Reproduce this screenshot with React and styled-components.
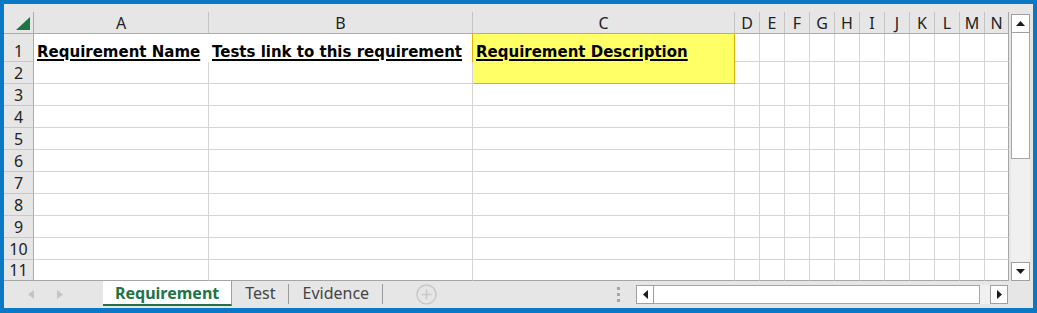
import React from "react";
import styled, { createGlobalStyle } from "styled-components";

const GlobalStyle = createGlobalStyle`
  html, body {
    margin: 0;
    padding: 0;
    background: #ffffff;
  }
`;

const COLUMNS = [
  { name: "A", width: 175 },
  { name: "B", width: 264 },
  { name: "C", width: 262 },
  { name: "D", width: 25 },
  { name: "E", width: 25 },
  { name: "F", width: 25 },
  { name: "G", width: 25 },
  { name: "H", width: 25 },
  { name: "I", width: 25 },
  { name: "J", width: 25 },
  { name: "K", width: 25 },
  { name: "L", width: 25 },
  { name: "M", width: 25 },
  { name: "N", width: 24 },
];

const ROW_HEIGHTS = [28, 22, 22, 22, 22, 22, 22, 22, 22, 22, 21];

const GRID = "#d4d4d4";
const EDGE = "#a6a6a6";

function App() {
  const lastRow = ROW_HEIGHTS.length;
  const lastCol = COLUMNS.length - 1;

  return (
    <>
      <GlobalStyle />
      <Frame>
        <Main>
          <SheetWrap>
            <Sheet
              $cols={COLUMNS.map((c) => c.width + "px").join(" ")}
              $rows={ROW_HEIGHTS.map((h) => h + "px").join(" ")}
            >
              <Corner>
                <svg width="29" height="21" viewBox="0 0 29 21">
                  <polygon points="12,18 26,18 26,5" fill="#217346" />
                </svg>
              </Corner>
              {COLUMNS.map((c, i) => (
                <ColHeader key={c.name} $last={i === lastCol}>
                  {c.name}
                </ColHeader>
              ))}

              {ROW_HEIGHTS.map((h, r) => {
                const row = r + 1;
                const isLast = row === lastRow;
                return (
                  <React.Fragment key={row}>
                    <RowHeader $last={isLast}>{row}</RowHeader>
                    {COLUMNS.map((c, i) => {
                      if (c.name === "C" && row === 2) return null;
                      if (c.name === "C" && row === 1) {
                        return (
                          <Highlight key={c.name}>
                            <Title>Requirement Description</Title>
                          </Highlight>
                        );
                      }
                      if (row === 1 && c.name === "A") {
                        return (
                          <Cell key={c.name} $noRight $noBottom>
                            <Title>Requirement Name</Title>
                          </Cell>
                        );
                      }
                      if (row === 1 && c.name === "B") {
                        return (
                          <Cell key={c.name} $noBottom>
                            <Title>Tests link to this requirement</Title>
                          </Cell>
                        );
                      }
                      return (
                        <Cell
                          key={c.name}
                          $lastRow={isLast}
                          $lastCol={i === lastCol}
                        />
                      );
                    })}
                  </React.Fragment>
                );
              })}
            </Sheet>
          </SheetWrap>

          <VScroll>
            <ScrollButton>
              <svg width="9" height="5" viewBox="0 0 9 5">
                <polygon points="0,5 9,5 4.5,0" fill="#1a1a1a" />
              </svg>
            </ScrollButton>
            <VTrack>
              <VThumb />
            </VTrack>
            <ScrollButton>
              <svg width="9" height="5" viewBox="0 0 9 5">
                <polygon points="0,0 9,0 4.5,5" fill="#1a1a1a" />
              </svg>
            </ScrollButton>
          </VScroll>
        </Main>

        <TabBar>
          <Nav>
            <svg width="6" height="9" viewBox="0 0 6 9">
              <polygon points="6,0 6,9 0,4.5" fill="#c4c4c4" />
            </svg>
            <svg width="6" height="9" viewBox="0 0 6 9">
              <polygon points="0,0 0,9 6,4.5" fill="#c4c4c4" />
            </svg>
          </Nav>
          <Tab $active>Requirement</Tab>
          <Tab>Test</Tab>
          <TabDivider />
          <Tab>Evidence</Tab>
          <TabDivider />
          <AddSheet>
            <svg width="21" height="21" viewBox="0 0 21 21">
              <circle
                cx="10.5"
                cy="10.5"
                r="9.5"
                fill="none"
                stroke="#c8c8c8"
                strokeWidth="1.5"
              />
              <path
                d="M10.5 5.5v10M5.5 10.5h10"
                stroke="#c8c8c8"
                strokeWidth="1.5"
              />
            </svg>
          </AddSheet>
          <Spacer />
          <Grip>
            <span />
            <span />
            <span />
          </Grip>
          <HScroll>
            <ScrollButton>
              <svg width="5" height="9" viewBox="0 0 5 9">
                <polygon points="5,0 5,9 0,4.5" fill="#1a1a1a" />
              </svg>
            </ScrollButton>
            <HThumb />
            <ScrollButton>
              <svg width="5" height="9" viewBox="0 0 5 9">
                <polygon points="0,0 0,9 5,4.5" fill="#1a1a1a" />
              </svg>
            </ScrollButton>
          </HScroll>
        </TabBar>
      </Frame>
    </>
  );
}

const Frame = styled.div`
  box-sizing: border-box;
  width: 1037px;
  height: 313px;
  border: 4px solid #0a78c4;
  border-bottom-width: 5px;
  background: #e6e6e6;
  display: flex;
  flex-direction: column;
  overflow: hidden;
`;

const Main = styled.div`
  display: flex;
  height: 277px;
`;

const SheetWrap = styled.div`
  padding-top: 8px;
  background: #e6e6e6;
`;

const Sheet = styled.div`
  display: grid;
  grid-template-columns: 30px ${(p) => p.$cols};
  grid-template-rows: 22px ${(p) => p.$rows};
  background: #ffffff;
`;

const headerText = `
  font-family: "Noto Sans", "Open Sans", sans-serif;
  font-size: 16px;
  color: #222222;
  background: #e6e6e6;
  box-sizing: border-box;
  display: flex;
  justify-content: center;
`;

const Corner = styled.div`
  ${headerText}
  border-right: 1px solid #ababab;
  border-bottom: 1px solid #ababab;
  svg {
    display: block;
  }
`;

const ColHeader = styled.div`
  ${headerText}
  align-items: center;
  line-height: 1;
  padding-top: 1px;
  border-right: 1px solid ${(p) => (p.$last ? EDGE : "#c4c4c4")};
  border-bottom: 1px solid #ababab;
`;

const RowHeader = styled.div`
  ${headerText}
  align-items: flex-end;
  padding-bottom: 0;
  line-height: 20px;
  border-right: 1px solid #ababab;
  border-bottom: 1px solid ${(p) => (p.$last ? EDGE : "#c8c8c8")};
`;

const Cell = styled.div`
  box-sizing: border-box;
  display: flex;
  align-items: flex-end;
  padding: 0 3px 0 3px;
  border-right: 1px solid
    ${(p) => (p.$noRight ? "transparent" : p.$lastCol ? EDGE : GRID)};
  border-bottom: 1px solid
    ${(p) => (p.$noBottom ? "transparent" : p.$lastRow ? EDGE : GRID)};
`;

const Highlight = styled.div`
  grid-row: span 2;
  box-sizing: border-box;
  background: #ffff66;
  border-right: 1px solid #e2b200;
  border-bottom: 1px solid #e2b200;
  box-shadow: -1px -1px 0 0 #e2b200;
  padding: 9px 3px 0 3px;
`;

const Title = styled.span`
  font-family: "DejaVu Sans", Verdana, sans-serif;
  font-weight: bold;
  font-size: 15px;
  line-height: 18px;
  color: #000000;
  text-decoration: underline;
  text-decoration-thickness: 2px;
  text-underline-offset: 2px;
  white-space: nowrap;
`;

const VScroll = styled.div`
  width: 24px;
  box-sizing: border-box;
  padding: 10px 3px 0 2px;
  display: flex;
  flex-direction: column;
  background: #e6e6e6;
`;

const ScrollButton = styled.div`
  box-sizing: border-box;
  width: 19px;
  height: 19px;
  flex: none;
  background: #ffffff;
  border: 1px solid #a0a0a0;
  display: flex;
  align-items: center;
  justify-content: center;
  svg {
    display: block;
  }
`;

const VTrack = styled.div`
  flex: 1;
  background: #f0f0f0;
`;

const VThumb = styled.div`
  box-sizing: border-box;
  height: 126px;
  background: #ffffff;
  border: 1px solid #a6a6a6;
  border-top: none;
`;

const TabBar = styled.div`
  height: 27px;
  display: flex;
  align-items: stretch;
  font-family: "Noto Sans", "Open Sans", sans-serif;
  font-size: 16px;
`;

const Nav = styled.div`
  width: 99px;
  display: flex;
  align-items: center;
  padding-left: 24px;
  gap: 23px;
  box-sizing: border-box;
  svg {
    display: block;
  }
`;

const Tab = styled.div`
  height: 25px;
  box-sizing: border-box;
  display: flex;
  align-items: center;
  padding: 0 ${(p) => (p.$active ? "12px" : "13px")};
  color: ${(p) => (p.$active ? "#217346" : "#444444")};
  font-weight: ${(p) => (p.$active ? 700 : 400)};
  background: ${(p) => (p.$active ? "#ffffff" : "transparent")};
  border-bottom: 2px solid ${(p) => (p.$active ? "#217346" : "transparent")};
  border-right: ${(p) => (p.$active ? "1px solid #a0a0a0" : "none")};
  white-space: nowrap;
`;

const TabDivider = styled.div`
  width: 1px;
  height: 20px;
  margin-top: 3px;
  background: #9b9b9b;
`;

const AddSheet = styled.div`
  margin-left: 33px;
  display: flex;
  align-items: center;
  svg {
    display: block;
  }
`;

const Spacer = styled.div`
  flex: 1;
`;

const Grip = styled.div`
  display: flex;
  flex-direction: column;
  justify-content: center;
  gap: 3px;
  margin-right: 16px;
  span {
    width: 3px;
    height: 3px;
    background: #a6a6a6;
  }
`;

const HScroll = styled.div`
  align-self: center;
  display: flex;
  width: 372px;
  height: 19px;
  margin-right: 25px;
  background: #f0f0f0;
  ${ScrollButton} {
    width: 18px;
  }
`;

const HThumb = styled.div`
  box-sizing: border-box;
  width: 326px;
  margin-right: 10px;
  background: #ffffff;
  border: 1px solid #a6a6a6;
  border-left: none;
`;

export default App;
